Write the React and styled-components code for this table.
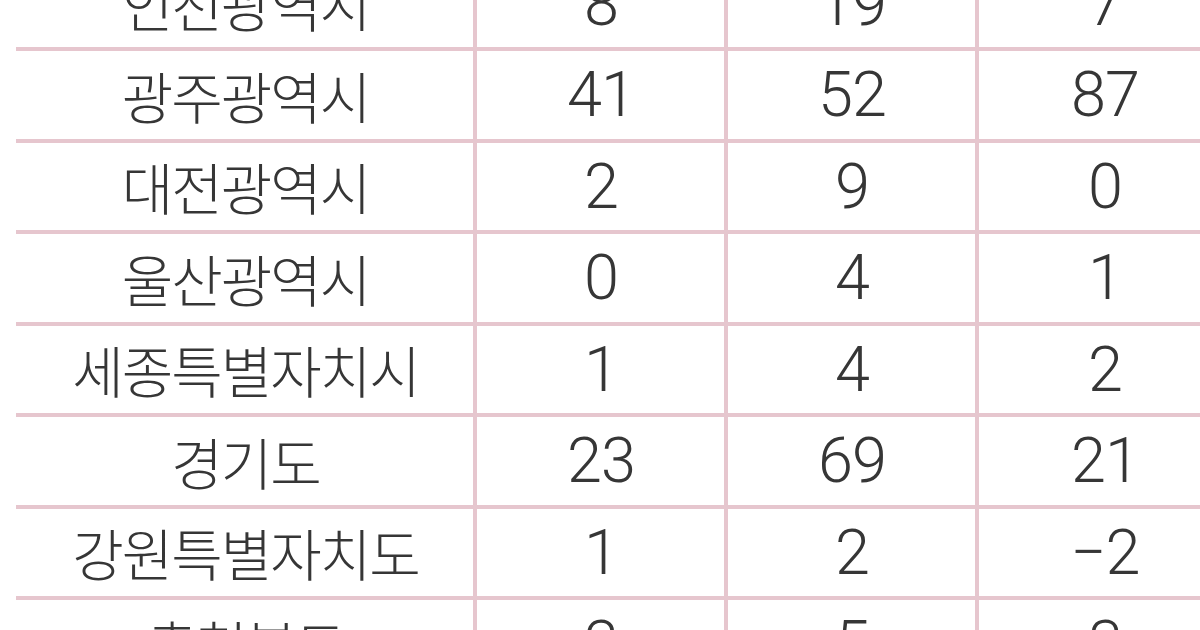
import React from "react";
import styled, { createGlobalStyle } from "styled-components";

const Global = createGlobalStyle`
  html, body {
    margin: 0;
    padding: 0;
    background: #ffffff;
    overflow: hidden;
  }
  body {
    width: 1200px;
    height: 630px;
  }
`;

const LINE = "#e6c6ce";

const Page = styled.div`
  width: 1200px;
  height: 630px;
  overflow: hidden;
  background: #ffffff;
`;

const Table = styled.div`
  margin-top: -40.5px;
  padding-left: 16px;
  display: flex;
  flex-direction: column;
  width: 1230px;
`;

const Row = styled.div`
  display: grid;
  grid-template-columns: 461px 251px 251px 251px;
  height: 91.5px;
  box-sizing: border-box;
  border-bottom: 4px solid ${LINE};
`;

const Cell = styled.div`
  display: flex;
  align-items: center;
  justify-content: center;
  box-sizing: border-box;
  border-right: ${(p) => (p.$last ? "none" : `4px solid ${LINE}`)};
  margin-bottom: -4px;
  padding-bottom: 4px;
  color: #363636;
  white-space: nowrap;
`;

const Region = styled.span`
  font-family: "Noto Sans CJK KR", sans-serif;
  font-weight: 300;
  font-size: 56px;
  letter-spacing: -2px;
  margin-right: -2px;
  line-height: 1;
`;

const Num = styled.span`
  font-family: Roboto, "Liberation Sans", sans-serif;
  font-weight: 300;
  font-size: 63px;
  letter-spacing: -1px;
  margin-right: -1px;
  line-height: 1;
`;

const rows = [
  ["인천광역시", "8", "19", "7"],
  ["광주광역시", "41", "52", "87"],
  ["대전광역시", "2", "9", "0"],
  ["울산광역시", "0", "4", "1"],
  ["세종특별자치시", "1", "4", "2"],
  ["경기도", "23", "69", "21"],
  ["강원특별자치도", "1", "2", "−2"],
  ["충청북도", "2", "5", "3"],
];

export default function App() {
  return (
    <Page>
      <Global />
      <Table>
        {rows.map((r) => (
          <Row key={r[0]}>
            <Cell>
              <Region>{r[0]}</Region>
            </Cell>
            <Cell>
              <Num>{r[1]}</Num>
            </Cell>
            <Cell>
              <Num>{r[2]}</Num>
            </Cell>
            <Cell $last>
              <Num>{r[3]}</Num>
            </Cell>
          </Row>
        ))}
      </Table>
    </Page>
  );
}
